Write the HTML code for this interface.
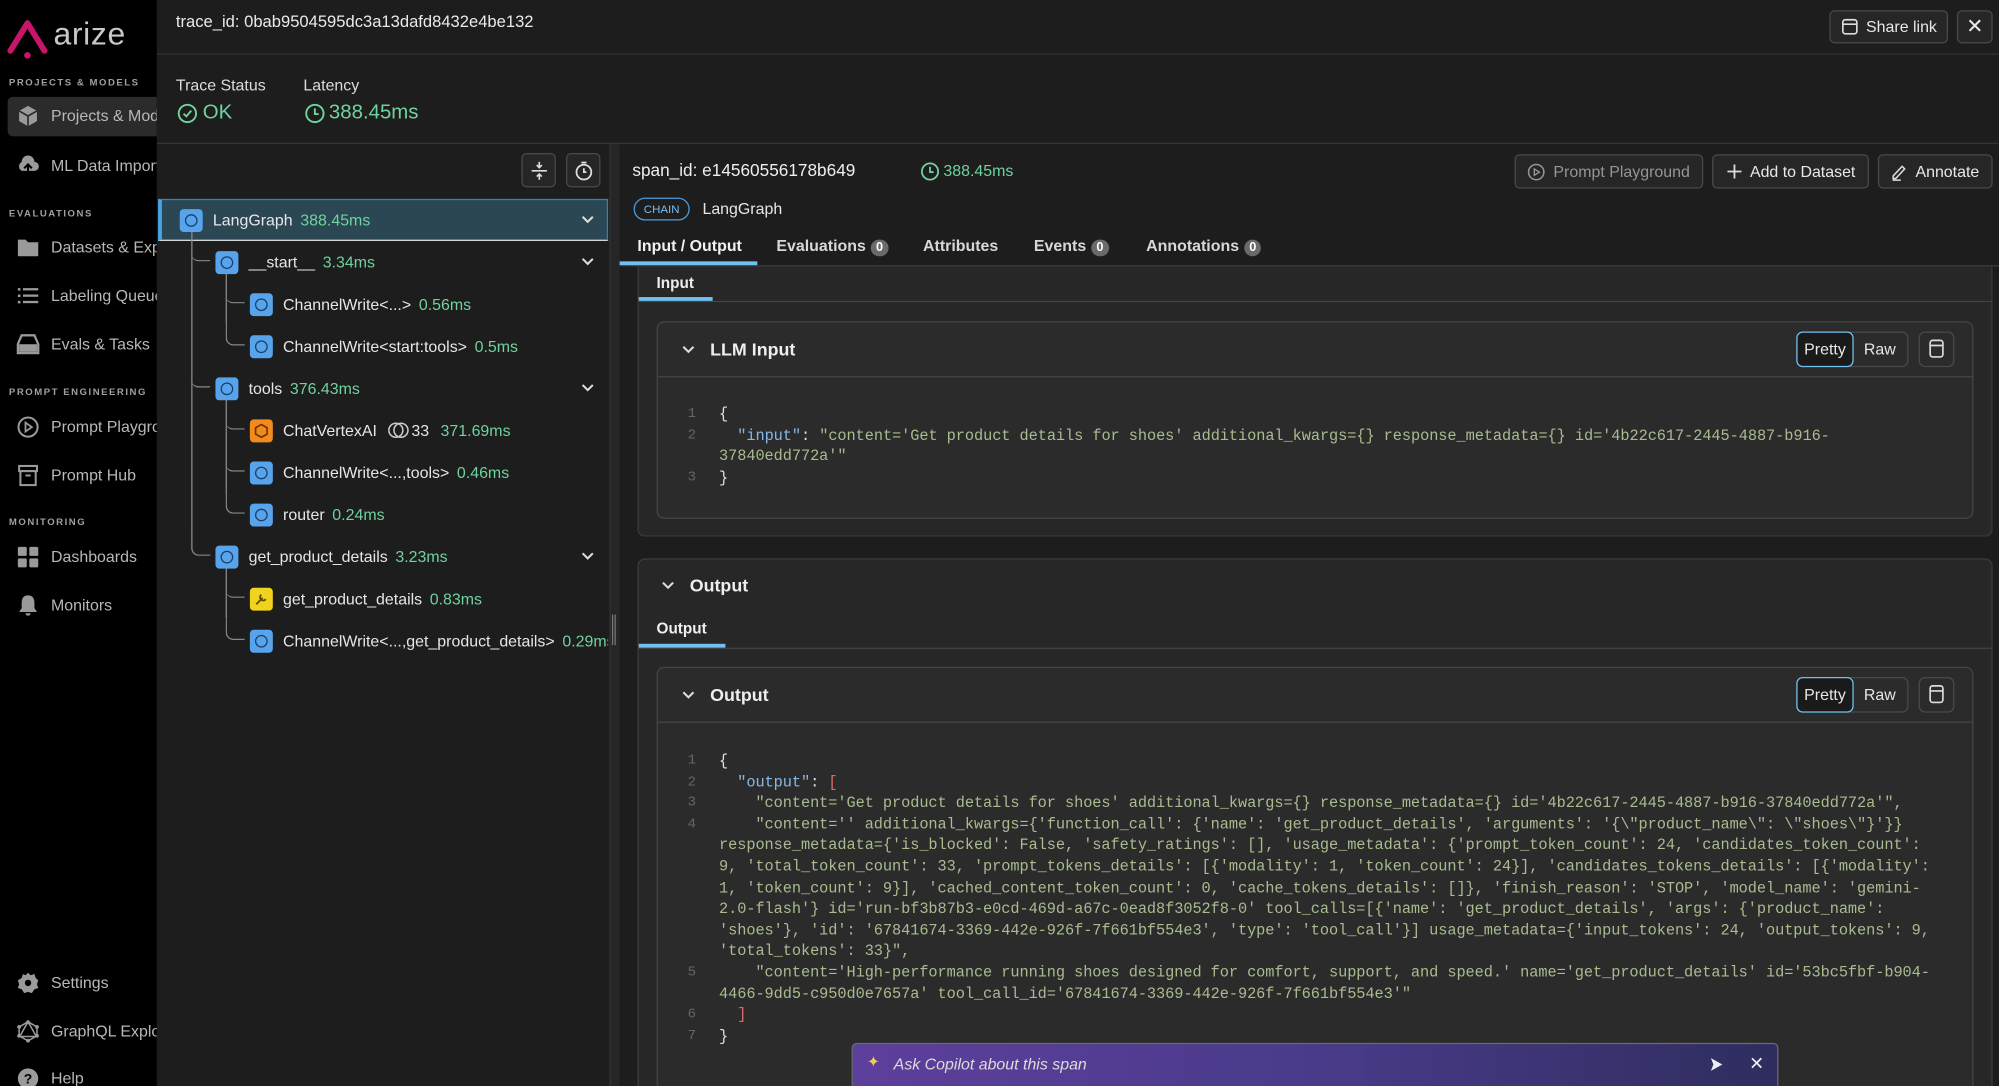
<!DOCTYPE html>
<html><head><meta charset="utf-8">
<style>
*{box-sizing:border-box;margin:0;padding:0}
html,body{width:1999px;height:1086px;overflow:hidden;background:#1d1d1d}
#s{position:absolute;left:0;top:0;width:1568px;height:852px;transform:scale(1.27487);transform-origin:0 0;font-family:"Liberation Sans",sans-serif;color:#e6e6e6;background:#1d1d1d;overflow:hidden}
.a{position:absolute;white-space:nowrap}
.sb{position:absolute;left:0;top:0;width:123px;height:852px;background:#000;overflow:hidden}
.sl{position:absolute;left:7px;font-size:7.5px;letter-spacing:1.2px;color:#a0a0a0;font-weight:bold;white-space:nowrap}
.si{position:absolute;left:40px;font-size:12.5px;color:#b8b8b8;transform:translateY(-50%);white-space:nowrap}
.ic{position:absolute;left:13px;width:18px;height:18px;transform:translateY(-50%)}
.g{color:#6fd39d}
.btn{position:absolute;border:1px solid #4a4a4a;border-radius:4px;background:#262626;font-size:12.5px;color:#e8e8e8;display:flex;align-items:center;justify-content:center;gap:6px;white-space:nowrap}
.row{position:absolute;left:124px;width:353px;height:33px;font-size:12.5px;display:flex;align-items:center;white-space:nowrap}
.sq{width:18px;height:18px;border-radius:3px;background:#58a4ec;display:inline-flex;align-items:center;justify-content:center;margin-right:8px;flex:none}
.sq i{width:10px;height:10px;border:1.5px solid #1d3f66;border-radius:50%}
.row .t{margin-left:6px;color:#6fd39d}
.chev{position:absolute;left:455px;width:12px;height:12px}
.ln{position:absolute;border-left:1px solid #8a8a8a}
.cv{position:absolute;border-left:1px solid #8a8a8a;border-bottom:1px solid #8a8a8a;border-bottom-left-radius:6px;width:12px}
.tab{position:absolute;top:186px;font-size:12.5px;font-weight:bold;color:#d8d8d8;white-space:nowrap}
.bd{display:inline-block;background:#6a6a6a;color:#fff;border-radius:7px;font-size:10px;padding:1px 4px;margin-left:4px;font-weight:bold}
.code{position:absolute;font-family:"Liberation Mono",monospace;font-size:12px;letter-spacing:-0.06px;line-height:16.6px;color:#a9bb8f;white-space:pre}
.num{position:absolute;font-family:"Liberation Mono",monospace;font-size:11px;line-height:16.6px;color:#5e6670;white-space:pre;text-align:right}
.k{color:#86b8e8}.w{color:#e0e0e0}.r{color:#d96b6b}
.card{position:absolute;border:1px solid #454545;border-radius:6px;background:#2b2b2b}
.pr{position:absolute;width:88px;height:28px;border:1px solid #4a4a4a;border-radius:5px;display:flex;font-size:12.5px}
.pr span{flex:1;display:flex;align-items:center;justify-content:center}
.pr .on{background:#1a1a1a;border:1px solid #6ec1f0;border-radius:5px;margin:-1px}
.cp{position:absolute;width:28px;height:28px;border:1px solid #4a4a4a;border-radius:5px}
</style></head><body><div id="s">

<div class="sb">
<svg class="a" style="left:5px;top:13px" width="33" height="33" viewBox="0 0 32 32"><path d="M3 26 L16 5 L29 26" fill="none" stroke="#c8146a" stroke-width="4.5" stroke-linejoin="round" stroke-linecap="round"/><circle cx="16" cy="29.5" r="2.5" fill="#c8146a"/></svg>
<div class="a" style="left:42px;top:13px;font-size:25px;color:#c8c8c8;letter-spacing:0.5px">arize</div>
<div class="sl" style="top:60px">PROJECTS &amp; MODELS</div>
<div class="a" style="left:6px;top:76px;width:130px;height:31px;background:#2b2b2b;border-radius:4px"></div>
<svg class="ic" style="top:91px" viewBox="0 0 18 18"><path d="M9 1 L16 5 V13 L9 17 L2 13 V5Z" fill="#9a9a9a"/><path d="M2 5 L9 9 L16 5 M9 9 V17" stroke="#2b2b2b" stroke-width="1.3" fill="none"/></svg>
<div class="si" style="top:91px">Projects &amp; Models</div>
<svg class="ic" style="top:130px" viewBox="0 0 18 18"><path d="M4 13 A4 4 0 0 1 4 6 A5 5 0 0 1 14 6 A3.5 3.5 0 0 1 14 13Z" fill="#9a9a9a"/><path d="M9 16 V9 M6 11 L9 8 L12 11" stroke="#000" stroke-width="1.6" fill="none"/></svg>
<div class="si" style="top:130px">ML Data Import</div>
<div class="sl" style="top:163px">EVALUATIONS</div>
<svg class="ic" style="top:194px" viewBox="0 0 18 18"><path d="M1 3 H7 L9 5 H17 V16 H1Z" fill="#9a9a9a"/></svg>
<div class="si" style="top:194px">Datasets &amp; Experiments</div>
<svg class="ic" style="top:232px" viewBox="0 0 18 18"><g fill="#9a9a9a"><rect x="1" y="3" width="2" height="2"/><rect x="1" y="8" width="2" height="2"/><rect x="1" y="13" width="2" height="2"/><rect x="5" y="3" width="12" height="1.8"/><rect x="5" y="8" width="12" height="1.8"/><rect x="5" y="13" width="12" height="1.8"/></g></svg>
<div class="si" style="top:232px">Labeling Queues</div>
<svg class="ic" style="top:270px" viewBox="0 0 18 18"><path d="M4 2 H14 L17 9 V16 H1 V9Z" fill="none" stroke="#9a9a9a" stroke-width="1.8"/><rect x="2" y="9" width="14" height="6" fill="#9a9a9a"/></svg>
<div class="si" style="top:270px">Evals &amp; Tasks</div>
<div class="sl" style="top:303px">PROMPT ENGINEERING</div>
<svg class="ic" style="top:335px" viewBox="0 0 18 18"><circle cx="9" cy="9" r="7.5" fill="none" stroke="#9a9a9a" stroke-width="1.6"/><path d="M7 5.5 L12 9 L7 12.5Z" fill="none" stroke="#9a9a9a" stroke-width="1.4"/></svg>
<div class="si" style="top:335px">Prompt Playground</div>
<svg class="ic" style="top:373px" viewBox="0 0 18 18"><rect x="2" y="1.5" width="14" height="4" fill="none" stroke="#9a9a9a" stroke-width="1.6"/><rect x="3" y="5.5" width="12" height="11" fill="none" stroke="#9a9a9a" stroke-width="1.6"/><path d="M7 9 H11" stroke="#9a9a9a" stroke-width="1.6"/></svg>
<div class="si" style="top:373px">Prompt Hub</div>
<div class="sl" style="top:405px">MONITORING</div>
<svg class="ic" style="top:437px" viewBox="0 0 18 18"><g fill="#9a9a9a"><rect x="1" y="1" width="7" height="7" rx="1"/><rect x="10" y="1" width="7" height="7" rx="1"/><rect x="1" y="10" width="7" height="7" rx="1"/><rect x="10" y="10" width="7" height="7" rx="1"/></g></svg>
<div class="si" style="top:437px">Dashboards</div>
<svg class="ic" style="top:475px" viewBox="0 0 18 18"><path d="M9 1 C5 1 4 4 4 7 V11 L2 14 H16 L14 11 V7 C14 4 13 1 9 1Z M7 15 A2 2 0 0 0 11 15Z" fill="#9a9a9a"/></svg>
<div class="si" style="top:475px">Monitors</div>
<svg class="ic" style="top:771px" viewBox="0 0 18 18"><path d="M9 1 L11 3 L14 2 L15 5 L17 7 L16 10 L17 13 L14 14 L12 17 L9 16 L6 17 L4 14 L1 13 L2 10 L1 7 L4 5 L5 2 L7 3Z" fill="#9a9a9a"/><circle cx="9" cy="9" r="2.5" fill="#000"/></svg>
<div class="si" style="top:771px">Settings</div>
<svg class="ic" style="top:809px" viewBox="0 0 18 18"><path d="M9 1.5 L16 5.5 V12.5 L9 16.5 L2 12.5 V5.5Z M9 1.5 L2.5 13 H15.5Z" fill="none" stroke="#9a9a9a" stroke-width="1.2"/><g fill="#9a9a9a"><circle cx="9" cy="1.8" r="1.5"/><circle cx="16" cy="5.5" r="1.5"/><circle cx="16" cy="12.5" r="1.5"/><circle cx="9" cy="16.3" r="1.5"/><circle cx="2" cy="12.5" r="1.5"/><circle cx="2" cy="5.5" r="1.5"/></g></svg>
<div class="si" style="top:809px">GraphQL Explorer</div>
<svg class="ic" style="top:846px" viewBox="0 0 18 18"><circle cx="9" cy="9" r="8" fill="#9a9a9a"/><text x="9" y="13" font-size="11" text-anchor="middle" fill="#000" font-weight="bold" font-family="Liberation Sans">?</text></svg>
<div class="si" style="top:846px">Help</div>
</div>

<!-- header -->
<div class="a" style="left:138px;top:9px;font-size:13px;color:#eaeaea">trace_id: 0bab9504595dc3a13dafd8432e4be132</div>
<div class="btn" style="left:1435px;top:8px;width:93px;height:26px"><svg width="14" height="14" viewBox="0 0 14 14"><rect x="1.5" y="1.5" width="11" height="11" rx="2" fill="none" stroke="#ddd" stroke-width="1.3"/><path d="M1.5 5 H12.5" stroke="#ddd" stroke-width="1.3"/></svg>Share link</div>
<div class="btn" style="left:1535px;top:8px;width:28px;height:26px;font-size:16px">✕</div>
<div class="a" style="left:123px;top:42px;width:1445px;height:1px;background:#333"></div>
<div class="a" style="left:138px;top:60px;font-size:12.5px;color:#dcdcdc">Trace Status</div>
<div class="a" style="left:238px;top:60px;font-size:12.5px;color:#dcdcdc">Latency</div>
<svg class="a" style="left:139px;top:81px" width="16" height="16" viewBox="0 0 16 16"><circle cx="8" cy="8" r="6.8" fill="none" stroke="#6fd39d" stroke-width="1.5"/><path d="M5 8.2 L7.2 10.3 L11 5.8" fill="none" stroke="#6fd39d" stroke-width="1.5"/></svg>
<div class="a g" style="left:159px;top:80px;font-size:16px">OK</div>
<svg class="a" style="left:239px;top:81px" width="16" height="16" viewBox="0 0 16 16"><circle cx="8" cy="8" r="6.8" fill="none" stroke="#6fd39d" stroke-width="1.5"/><path d="M8 4 V8.5 H11" fill="none" stroke="#6fd39d" stroke-width="1.5"/></svg>
<div class="a g" style="left:258px;top:80px;font-size:16px">388.45ms</div>
<div class="a" style="left:123px;top:112px;width:1445px;height:1px;background:#333"></div>

<!-- tree -->
<div class="btn" style="left:409px;top:120px;width:27px;height:27px"><svg width="14" height="16" viewBox="0 0 14 16"><path d="M1 8 H13 M7 1 V5 M5 3.5 L7 5.5 L9 3.5 M7 15 V11 M5 12.5 L7 10.5 L9 12.5" stroke="#ddd" stroke-width="1.3" fill="none"/></svg></div>
<div class="btn" style="left:444px;top:120px;width:27px;height:27px"><svg width="16" height="16" viewBox="0 0 16 16"><circle cx="8" cy="9" r="5.8" fill="none" stroke="#ddd" stroke-width="1.4"/><path d="M6 1.5 H10 M8 6 V9 H10" stroke="#ddd" stroke-width="1.4" fill="none"/></svg></div>

<div class="a" style="left:124px;top:156px;width:353px;height:33px;background:#2c4754;border:1px solid #2f80c8;border-left:3px solid #46a4e6;border-bottom-color:#ddd"></div>
<div class="ln" style="left:150px;top:181px;height:250px"></div>
<div class="cv" style="left:150px;top:290px;height:14px;width:15px;border-left:none"></div>
<div class="cv" style="left:150px;top:190px;height:15px;width:15px;border-left:none"></div>
<div class="cv" style="left:150px;top:418px;height:18px;width:15px"></div>
<div class="ln" style="left:177px;top:214px;height:40px"></div>
<div class="cv" style="left:177px;top:225px;height:13px;width:15px;border-left:none"></div>
<div class="cv" style="left:177px;top:254px;height:17px;width:15px"></div>
<div class="ln" style="left:177px;top:313px;height:75px"></div>
<div class="cv" style="left:177px;top:325px;height:12px;width:15px;border-left:none"></div>
<div class="cv" style="left:177px;top:358px;height:12px;width:15px;border-left:none"></div>
<div class="cv" style="left:177px;top:388px;height:15px;width:15px"></div>
<div class="ln" style="left:177px;top:445px;height:40px"></div>
<div class="cv" style="left:177px;top:456px;height:13px;width:15px;border-left:none"></div>
<div class="cv" style="left:177px;top:485px;height:17px;width:15px"></div>

<div class="row" style="top:156px;padding-left:17px"><span class="sq"><i></i></span>LangGraph<span class="t">388.45ms</span></div>
<div class="row" style="top:189px;padding-left:45px"><span class="sq"><i></i></span>__start__<span class="t">3.34ms</span></div>
<div class="row" style="top:222px;padding-left:72px"><span class="sq"><i></i></span>ChannelWrite&lt;...&gt;<span class="t">0.56ms</span></div>
<div class="row" style="top:255px;padding-left:72px"><span class="sq"><i></i></span>ChannelWrite&lt;start:tools&gt;<span class="t">0.5ms</span></div>
<div class="row" style="top:288px;padding-left:45px"><span class="sq"><i></i></span>tools<span class="t">376.43ms</span></div>
<div class="row" style="top:321px;padding-left:72px"><span class="sq" style="background:#f28a1e"><svg width="12" height="12" viewBox="0 0 12 12"><path d="M6 1 L10.5 3.5 V8.5 L6 11 L1.5 8.5 V3.5Z" fill="none" stroke="#6b3500" stroke-width="1.3"/></svg></span>ChatVertexAI<svg style="margin-left:8px" width="17" height="13" viewBox="0 0 17 13"><circle cx="6.5" cy="6.5" r="5.5" fill="none" stroke="#ccc" stroke-width="1.2"/><circle cx="10.5" cy="6.5" r="5.5" fill="none" stroke="#ccc" stroke-width="1.2"/></svg><span style="margin-left:2px">33</span><span class="t" style="margin-left:9px">371.69ms</span></div>
<div class="row" style="top:354px;padding-left:72px"><span class="sq"><i></i></span>ChannelWrite&lt;...,tools&gt;<span class="t">0.46ms</span></div>
<div class="row" style="top:387px;padding-left:72px"><span class="sq"><i></i></span>router<span class="t">0.24ms</span></div>
<div class="row" style="top:420px;padding-left:45px"><span class="sq"><i></i></span>get_product_details<span class="t">3.23ms</span></div>
<div class="row" style="top:453px;padding-left:72px"><span class="sq" style="background:#f1d21c"><svg width="12" height="12" viewBox="0 0 12 12"><path d="M2 10 L7 5 M6 2.5 A2.5 2.5 0 1 0 9.5 6" fill="none" stroke="#5a4a00" stroke-width="1.4"/></svg></span>get_product_details<span class="t">0.83ms</span></div>
<div class="row" style="top:486px;padding-left:72px;overflow:hidden"><span class="sq"><i></i></span>ChannelWrite&lt;...,get_product_details&gt;<span class="t">0.29ms</span></div>
<svg class="chev" style="top:166px" viewBox="0 0 12 12"><path d="M2 4 L6 8 L10 4" fill="none" stroke="#ddd" stroke-width="1.6"/></svg>
<svg class="chev" style="top:199px" viewBox="0 0 12 12"><path d="M2 4 L6 8 L10 4" fill="none" stroke="#ddd" stroke-width="1.6"/></svg>
<svg class="chev" style="top:298px" viewBox="0 0 12 12"><path d="M2 4 L6 8 L10 4" fill="none" stroke="#ddd" stroke-width="1.6"/></svg>
<svg class="chev" style="top:430px" viewBox="0 0 12 12"><path d="M2 4 L6 8 L10 4" fill="none" stroke="#ddd" stroke-width="1.6"/></svg>

<div class="a" style="left:478px;top:113px;width:8px;height:739px;background:#262626;border-left:1px solid #333"></div>
<div class="a" style="left:480px;top:482px;width:3px;height:24px;border-left:1px solid #777;border-right:1px solid #777"></div>

<!-- right header -->
<div class="a" style="left:496px;top:126px;font-size:13.5px;color:#eee">span_id: e14560556178b649</div>
<svg class="a" style="left:722px;top:127px" width="15" height="15" viewBox="0 0 16 16"><circle cx="8" cy="8" r="6.8" fill="none" stroke="#6fd39d" stroke-width="1.5"/><path d="M8 4 V8.5 H11" fill="none" stroke="#6fd39d" stroke-width="1.5"/></svg>
<div class="a g" style="left:740px;top:127px;font-size:12.5px">388.45ms</div>
<div class="btn" style="left:1188px;top:121px;width:148px;height:27px;color:#959595"><svg width="14" height="14" viewBox="0 0 14 14"><circle cx="7" cy="7" r="6" fill="none" stroke="#959595" stroke-width="1.2"/><path d="M5.5 4.5 L9.5 7 L5.5 9.5Z" fill="none" stroke="#959595" stroke-width="1.1"/></svg>Prompt Playground</div>
<div class="btn" style="left:1343px;top:121px;width:123px;height:27px"><svg width="13" height="13" viewBox="0 0 13 13"><path d="M6.5 1 V12 M1 6.5 H12" stroke="#ddd" stroke-width="1.4"/></svg>Add to Dataset</div>
<div class="btn" style="left:1473px;top:121px;width:90px;height:27px"><svg width="13" height="14" viewBox="0 0 13 14"><path d="M2 10 L9 2.5 L11 4.5 L4 12 H2Z M1.5 13.3 H8" fill="none" stroke="#ddd" stroke-width="1.2"/></svg>Annotate</div>
<div class="a" style="left:497px;top:155px;width:44px;height:18px;border:1px solid #4a9de0;border-radius:9px;font-size:9px;color:#7cbcf2;text-align:center;line-height:16px">CHAIN</div>
<div class="a" style="left:551px;top:157px;font-size:12.5px;color:#e6e6e6">LangGraph</div>
<div class="tab" style="left:500px;color:#f2f2f2">Input / Output</div>
<div class="tab" style="left:609px">Evaluations<span class="bd">0</span></div>
<div class="tab" style="left:724px">Attributes</div>
<div class="tab" style="left:811px">Events<span class="bd">0</span></div>
<div class="tab" style="left:899px">Annotations<span class="bd">0</span></div>
<div class="a" style="left:486px;top:208px;width:1082px;height:1px;background:#3c3c3c"></div>
<div class="a" style="left:486px;top:205px;width:108px;height:3px;background:#6ec1f0"></div>

<!-- input section -->
<div class="a" style="left:500px;top:209px;width:1063px;height:212px;background:#272727;border:1px solid #3c3c3c;border-top:none;border-radius:0 0 6px 6px"></div>
<div class="a" style="left:515px;top:215px;font-size:12px;font-weight:bold;color:#eee">Input</div>
<div class="a" style="left:501px;top:236px;width:1061px;height:1px;background:#444"></div>
<div class="a" style="left:501px;top:233px;width:58px;height:3px;background:#6ec1f0"></div>
<div class="card" style="left:515px;top:252px;width:1033px;height:155px"></div>
<div class="a" style="left:516px;top:295px;width:1031px;height:1px;background:#444"></div>
<svg class="a" style="left:534px;top:268px" width="12" height="12" viewBox="0 0 12 12"><path d="M2 4 L6 8 L10 4" fill="none" stroke="#ddd" stroke-width="1.6"/></svg>
<div class="a" style="left:557px;top:266px;font-size:14px;font-weight:bold;color:#eee">LLM Input</div>
<div class="pr" style="left:1409px;top:260px"><span class="on">Pretty</span><span>Raw</span></div>
<div class="cp" style="left:1505px;top:260px"><svg width="26" height="26" viewBox="0 0 26 26"><rect x="8" y="6" width="10" height="13" rx="2" fill="none" stroke="#ddd" stroke-width="1.3"/><path d="M8 10 H18" stroke="#ddd" stroke-width="1.3"/></svg></div>
<div class="num" style="left:530px;top:317px;width:16px">1
2

3</div>
<div class="code" style="left:564px;top:317px"><span class="w">{</span>
  <span class="k">"input"</span><span class="w">: </span>"content='Get product details for shoes' additional_kwargs={} response_metadata={} id='4b22c617-2445-4887-b916-
37840edd772a'"
<span class="w">}</span></div>

<!-- output section -->
<div class="a" style="left:500px;top:438px;width:1063px;height:430px;background:#272727;border:1px solid #3c3c3c;border-radius:6px"></div>
<svg class="a" style="left:518px;top:453px" width="12" height="12" viewBox="0 0 12 12"><path d="M2 4 L6 8 L10 4" fill="none" stroke="#ddd" stroke-width="1.6"/></svg>
<div class="a" style="left:541px;top:451px;font-size:14px;font-weight:bold;color:#eee">Output</div>
<div class="a" style="left:515px;top:486px;font-size:12px;font-weight:bold;color:#eee">Output</div>
<div class="a" style="left:501px;top:508px;width:1061px;height:1px;background:#444"></div>
<div class="a" style="left:501px;top:505px;width:68px;height:3px;background:#6ec1f0"></div>
<div class="card" style="left:515px;top:523px;width:1033px;height:340px"></div>
<div class="a" style="left:516px;top:566px;width:1031px;height:1px;background:#444"></div>
<svg class="a" style="left:534px;top:539px" width="12" height="12" viewBox="0 0 12 12"><path d="M2 4 L6 8 L10 4" fill="none" stroke="#ddd" stroke-width="1.6"/></svg>
<div class="a" style="left:557px;top:537px;font-size:14px;font-weight:bold;color:#eee">Output</div>
<div class="pr" style="left:1409px;top:531px"><span class="on">Pretty</span><span>Raw</span></div>
<div class="cp" style="left:1505px;top:531px"><svg width="26" height="26" viewBox="0 0 26 26"><rect x="8" y="6" width="10" height="13" rx="2" fill="none" stroke="#ddd" stroke-width="1.3"/><path d="M8 10 H18" stroke="#ddd" stroke-width="1.3"/></svg></div>
<div class="num" style="left:530px;top:589px;width:16px">1
2
3
4






5

6
7</div>
<div class="code" style="left:564px;top:589px"><span class="w">{</span>
  <span class="k">"output"</span><span class="w">: </span><span class="r">[</span>
    "content='Get product details for shoes' additional_kwargs={} response_metadata={} id='4b22c617-2445-4887-b916-37840edd772a'",
    "content='' additional_kwargs={'function_call': {'name': 'get_product_details', 'arguments': '{\"product_name\": \"shoes\"}'}}
response_metadata={'is_blocked': False, 'safety_ratings': [], 'usage_metadata': {'prompt_token_count': 24, 'candidates_token_count':
9, 'total_token_count': 33, 'prompt_tokens_details': [{'modality': 1, 'token_count': 24}], 'candidates_tokens_details': [{'modality':
1, 'token_count': 9}], 'cached_content_token_count': 0, 'cache_tokens_details': []}, 'finish_reason': 'STOP', 'model_name': 'gemini-
2.0-flash'} id='run-bf3b87b3-e0cd-469d-a67c-0ead8f3052f8-0' tool_calls=[{'name': 'get_product_details', 'args': {'product_name':
'shoes'}, 'id': '67841674-3369-442e-926f-7f661bf554e3', 'type': 'tool_call'}] usage_metadata={'input_tokens': 24, 'output_tokens': 9,
'total_tokens': 33}",
    "content='High-performance running shoes designed for comfort, support, and speed.' name='get_product_details' id='53bc5fbf-b904-
4466-9dd5-c950d0e7657a' tool_call_id='67841674-3369-442e-926f-7f661bf554e3'"
  <span class="r">]</span>
<span class="w">}</span></div>

<!-- copilot -->
<div class="a" style="left:668px;top:818px;width:727px;height:36px;background:linear-gradient(90deg,#5d3f9c,#4a3b8a 50%,#2e2d5e);border:1px solid #6a6a7a;border-radius:4px 4px 0 0"></div>
<div class="a" style="left:680px;top:826px;font-size:12px;color:#f0d040">✦</div>
<div class="a" style="left:701px;top:828px;font-size:12.5px;font-style:italic;color:#dcdcdc">Ask Copilot about this span</div>
<svg class="a" style="left:1340px;top:829px" width="12" height="12" viewBox="0 0 12 12"><path d="M2 1 L11 6 L2 11 L4 6Z" fill="#eee"/></svg>
<div class="a" style="left:1372px;top:826px;font-size:14px;color:#eee">✕</div>
</div></body></html>
